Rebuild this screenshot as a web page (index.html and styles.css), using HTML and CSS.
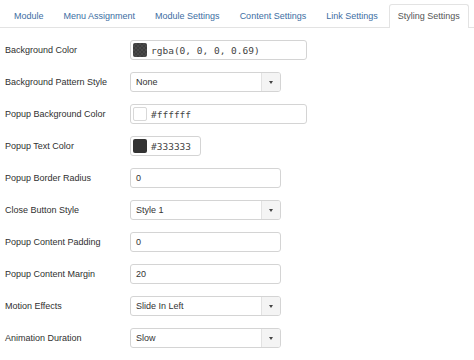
FILE: index.html
```html
<!DOCTYPE html>
<html>
<head>
<meta charset="utf-8">
<link rel="stylesheet" href="styles.css">
</head>
<body>
<ul class="tabs">
  <li class="tab">Module</li>
  <li class="tab">Menu Assignment</li>
  <li class="tab">Module Settings</li>
  <li class="tab">Content Settings</li>
  <li class="tab">Link Settings</li>
  <li class="tab active">Styling Settings</li>
</ul>
<div class="form">
  <div class="row">
    <label class="label">Background Color</label>
    <div class="color wide"><span class="swatch checker"></span><span class="val">rgba(0, 0, 0, 0.69)</span></div>
  </div>
  <div class="row">
    <label class="label">Background Pattern Style</label>
    <div class="select"><span class="sel-text">None</span><span class="sel-btn"><i class="caret"></i></span></div>
  </div>
  <div class="row">
    <label class="label">Popup Background Color</label>
    <div class="color wide"><span class="swatch white"></span><span class="val">#ffffff</span></div>
  </div>
  <div class="row">
    <label class="label">Popup Text Color</label>
    <div class="color short"><span class="swatch dark"></span><span class="val">#333333</span></div>
  </div>
  <div class="row">
    <label class="label">Popup Border Radius</label>
    <div class="text">0</div>
  </div>
  <div class="row">
    <label class="label">Close Button Style</label>
    <div class="select"><span class="sel-text">Style 1</span><span class="sel-btn"><i class="caret"></i></span></div>
  </div>
  <div class="row">
    <label class="label">Popup Content Padding</label>
    <div class="text">0</div>
  </div>
  <div class="row">
    <label class="label">Popup Content Margin</label>
    <div class="text">20</div>
  </div>
  <div class="row">
    <label class="label">Motion Effects</label>
    <div class="select"><span class="sel-text">Slide In Left</span><span class="sel-btn"><i class="caret"></i></span></div>
  </div>
  <div class="row">
    <label class="label">Animation Duration</label>
    <div class="select"><span class="sel-text">Slow</span><span class="sel-btn"><i class="caret"></i></span></div>
  </div>
</div>
</body>
</html>
```
FILE: styles.css
```css
html, body {
  margin: 0;
  padding: 0;
  background: #fff;
}
body {
  font-family: "Liberation Sans", Arial, sans-serif;
  font-size: 9px;
  color: #333;
}
.tabs {
  list-style: none;
  margin: 0;
  padding: 4px 0 0 5px;
  display: flex;
  border-bottom: 1px solid #e3e3e3;
}
.tab {
  flex: none;
  white-space: nowrap;
  height: 22px;
  line-height: 22px;
  padding: 0 8px;
  margin-right: 2px;
  margin-bottom: -1px;
  color: #3d6ea3;
  border: 1px solid transparent;
  border-bottom: 0;
  border-radius: 3px 3px 0 0;
}
.tab.active {
  color: #555;
  background: #fff;
  border-color: #e3e3e3;
  height: 23px;
}
.form {
  padding: 12px 0 0 5px;
}
.row {
  display: flex;
  align-items: center;
  height: 20px;
  margin-bottom: 12px;
}
.label {
  width: 125px;
  flex: none;
  white-space: nowrap;
  color: #2f2f2f;
}
.color, .text, .select {
  box-sizing: border-box;
  height: 20px;
  border: 1px solid #d4d4d4;
  border-radius: 3px;
  background: #fff;
  display: flex;
  align-items: center;
}
.color.wide { width: 177px; }
.color.short { width: 71px; }
.text { width: 151px; padding-left: 5px; }
.select { width: 151px; }
.swatch {
  width: 14px;
  height: 14px;
  margin: 0 4px 0 2px;
  border-radius: 2px;
  flex: none;
  box-sizing: border-box;
}
.swatch.checker {
  background-color: #3e3e3e;
  background-image:
    linear-gradient(45deg, #4a4a4a 25%, transparent 25%, transparent 75%, #4a4a4a 75%),
    linear-gradient(45deg, #4a4a4a 25%, transparent 25%, transparent 75%, #4a4a4a 75%);
  background-size: 4px 4px;
  background-position: 0 0, 2px 2px;
}
.swatch.white {
  background: #fff;
  border: 1px solid #d8d8d8;
}
.swatch.dark {
  background: #333;
}
.val {
  font-family: "DejaVu Sans Mono", "Liberation Mono", monospace;
  font-size: 9.5px;
  color: #444;
}
.sel-text {
  flex: 1;
  padding-left: 5px;
}
.sel-btn {
  width: 18px;
  height: 100%;
  border-left: 1px solid #e2e2e2;
  background: #f4f4f4;
  border-radius: 0 2px 2px 0;
  display: flex;
  align-items: center;
  justify-content: center;
}
.caret {
  width: 0;
  height: 0;
  border-left: 2.5px solid transparent;
  border-right: 2.5px solid transparent;
  border-top: 3px solid #444;
}
```
